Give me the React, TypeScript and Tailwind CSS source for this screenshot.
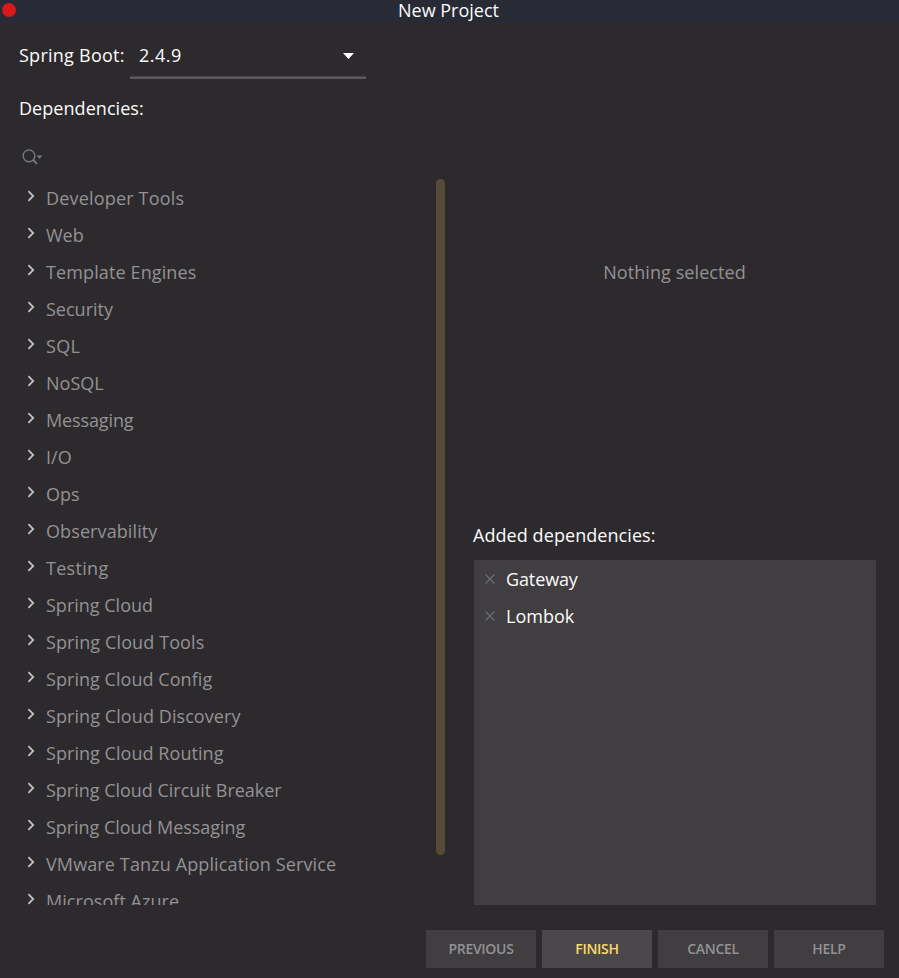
import clsx from "clsx"

interface Category {
  name: string
  tracking?: string
}

const CATEGORIES: Category[] = [
  { name: "Developer Tools", tracking: "tracking-[0.18px]" },
  { name: "Web" },
  { name: "Template Engines", tracking: "tracking-[0.12px]" },
  { name: "Security" },
  { name: "SQL", tracking: "tracking-[0.3px]" },
  { name: "NoSQL" },
  { name: "Messaging", tracking: "tracking-[-0.12px]" },
  { name: "I/O" },
  { name: "Ops" },
  { name: "Observability", tracking: "tracking-[0.1px]" },
  { name: "Testing", tracking: "tracking-[0.3px]" },
  { name: "Spring Cloud" },
  { name: "Spring Cloud Tools", tracking: "tracking-[0.11px]" },
  { name: "Spring Cloud Config", tracking: "tracking-[0.05px]" },
  { name: "Spring Cloud Discovery", tracking: "tracking-[0.08px]" },
  { name: "Spring Cloud Routing", tracking: "tracking-[0.05px]" },
  { name: "Spring Cloud Circuit Breaker", tracking: "tracking-[-0.02px]" },
  { name: "Spring Cloud Messaging", tracking: "tracking-[-0.05px]" },
  { name: "VMware Tanzu Application Service", tracking: "tracking-[0.12px]" },
  { name: "Microsoft Azure", tracking: "tracking-[0.05px]" },
]

const ADDED = ["Gateway", "Lombok"]

const ACTIONS = [
  { label: "PREVIOUS" },
  { label: "FINISH", primary: true },
  { label: "CANCEL" },
  { label: "HELP" },
]

function TitleBar() {
  return (
    <header className="h-[23px] shrink-0 bg-[#282a36] flex items-start">
      <span className="ml-[2px] mt-[3px] size-[14px] rounded-full bg-[#d81a1a]" />
      <h1 className="flex-1 pr-[18px] text-center leading-[20px]">New Project</h1>
    </header>
  )
}

function VersionSelect() {
  return (
    <div className="flex h-[46px] items-start">
      <span className="w-[111px] pt-[10px] tracking-[0.25px]">Spring Boot:</span>
      <button className="flex h-[46px] w-[236px] items-start border-b-2 border-[#5b595c] pl-[9px] pr-[12px] pt-[10px] text-left shadow-[inset_0_-1px_0_#474548]">
        <span className="flex-1 tracking-[0.5px]">2.4.9</span>
        <svg className="mt-[10px]" width="11" height="6" viewBox="0 0 11 6">
          <path d="M0 0h11L5.5 6z" fill="#fff" />
        </svg>
      </button>
    </div>
  )
}

function SearchIcon() {
  return (
    <svg width="22" height="16" viewBox="0 0 22 16" fill="none">
      <circle cx="7" cy="6.8" r="5.9" stroke="#727b7f" strokeWidth="1.4" />
      <path d="M11.2 11l3.8 3.8" stroke="#727b7f" strokeWidth="1.9" />
      <path d="M14.5 6.5h6L17.5 9.8z" fill="#727b7f" />
    </svg>
  )
}

function CategoryRow({ name, tracking }: Category) {
  return (
    <li className={clsx("flex h-[37px] shrink-0 items-center text-[#939293]", tracking)}>
      <svg className="mb-[3px] ml-[8px] mr-[11px]" width="8" height="12" viewBox="0 0 8 12" fill="none">
        <path d="M1.4 1.2L6.2 6L1.4 10.8" stroke="#c1c0c0" strokeWidth="1.8" />
      </svg>
      {name}
    </li>
  )
}

function AddedRow({ name }: { name: string }) {
  return (
    <li className="flex h-[37px] items-center">
      <svg className="ml-[11px] mr-[11px]" width="10" height="10" viewBox="0 0 10 10" fill="none">
        <path d="M.5.5l9 9M9.5.5l-9 9" stroke="#6c7072" strokeWidth="1.1" />
      </svg>
      <span className={name === "Gateway" ? "tracking-[-0.12px]" : undefined}>{name}</span>
    </li>
  )
}

export default function App() {
  return (
    <div className="flex h-[978px] w-[899px] flex-col overflow-hidden bg-[#2d2a2e] font-['Open_Sans',sans-serif] text-[18px] leading-[24px] text-[#fcfcfa]">
      <TitleBar />
      <main className="flex h-[882px] pl-[19px] pt-[10px]">
        <section className="flex w-[455px] flex-col">
          <VersionSelect />
          <h2 className="mt-[17px] tracking-[0.05px]">Dependencies:</h2>
          <div className="ml-[3px] mt-[29px]">
            <SearchIcon />
          </div>
          <div className="mt-[14px] flex h-[726px]">
            <ul className="flex w-[417px] flex-col overflow-hidden">
              {CATEGORIES.map((category) => (
                <CategoryRow key={category.name} {...category} />
              ))}
            </ul>
            <div className="h-[676px] w-[9px] rounded-full bg-[#564b36]" />
          </div>
        </section>
        <section className="flex w-[402px] flex-col">
          <p className="mt-[227px] pr-[1px] text-center tracking-[0.08px] text-[#939293]">Nothing selected</p>
          <h2 className="-ml-px mt-[239px] tracking-[0.07px]">Added dependencies:</h2>
          <ul className="mt-[13px] h-[345px] bg-[#403e41]">
            {ADDED.map((name) => (
              <AddedRow key={name} name={name} />
            ))}
          </ul>
        </section>
      </main>
      <footer className="mt-[25px] flex justify-end gap-[6px] pr-[15px]">
        {ACTIONS.map(({ label, primary }) => (
          <button
            key={label}
            className={clsx(
              "h-[38px] w-[110px] text-[14px] font-semibold tracking-[-0.3px]",
              primary ? "bg-[#4a484b] text-[#ffd866]" : "bg-[#403e41] text-[#939293]",
            )}
          >
            {label}
          </button>
        ))}
      </footer>
    </div>
  )
}
